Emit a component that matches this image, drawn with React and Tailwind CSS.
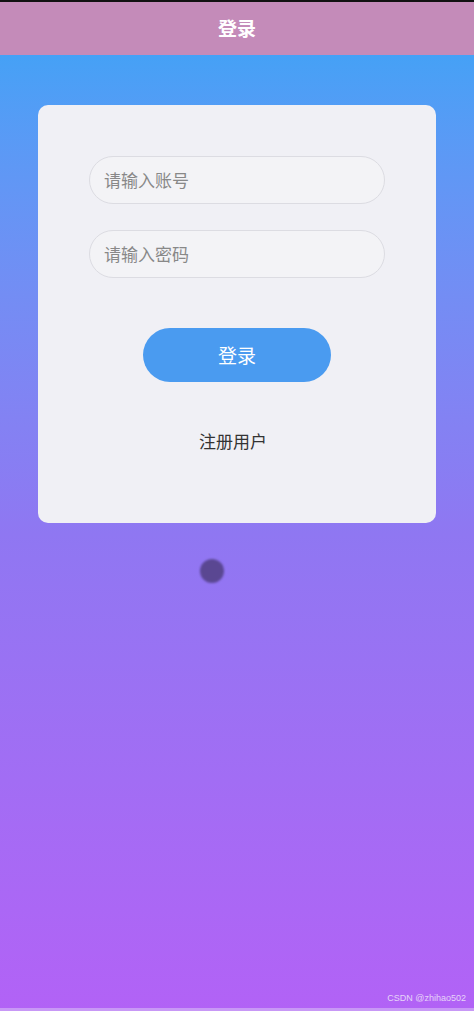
import React from "react";

export default function App() {
  const font = { fontFamily: '"Noto Sans CJK SC", "Noto Sans", sans-serif' };
  return (
    <div
      className="w-[474px] h-[1011px] flex flex-col overflow-hidden bg-black"
      style={font}
    >
      <div className="h-[2px] bg-[#111]" />
      <div className="h-[53px] bg-[#c48bb9] flex items-center justify-center text-white text-[19px] font-bold">
        登录
      </div>
      <div className="flex-1 relative flex flex-col items-center bg-gradient-to-b from-[#45a1f6] via-[#8f77f2] to-[#b262f6]">
        <div className="mt-[50px] w-[398px] h-[418px] rounded-[10px] bg-[#f0f0f5] flex flex-col items-center pt-[51px]">
          <div className="w-[296px] h-[48px] rounded-full border border-[#dcdce2] bg-[#f3f3f6] flex items-center pl-[14px] text-[17px] text-[#888]">
            请输入账号
          </div>
          <div className="mt-[26px] w-[296px] h-[48px] rounded-full border border-[#dcdce2] bg-[#f3f3f6] flex items-center pl-[14px] text-[17px] text-[#888]">
            请输入密码
          </div>
          <div className="mt-[50px] w-[188px] h-[54px] rounded-full bg-[#4a9bf0] flex items-center justify-center text-white text-[19px]">
            登录
          </div>
          <div className="mt-[46px] mr-[8px] text-[17px] text-[#333]">注册用户</div>
        </div>
        <div className="mt-[36px] mr-[50px] w-[24px] h-[24px] rounded-full bg-[#5a4792] blur-[1px]" />
        <div className="absolute right-[8px] bottom-[6px] text-[9px] text-[#e6d4f8]" style={{ fontFamily: '"Liberation Sans", sans-serif' }}>
          CSDN @zhihao502
        </div>
        <div className="absolute left-0 right-0 bottom-0 h-[3px] bg-[#c898f6]" />
      </div>
    </div>
  );
}
